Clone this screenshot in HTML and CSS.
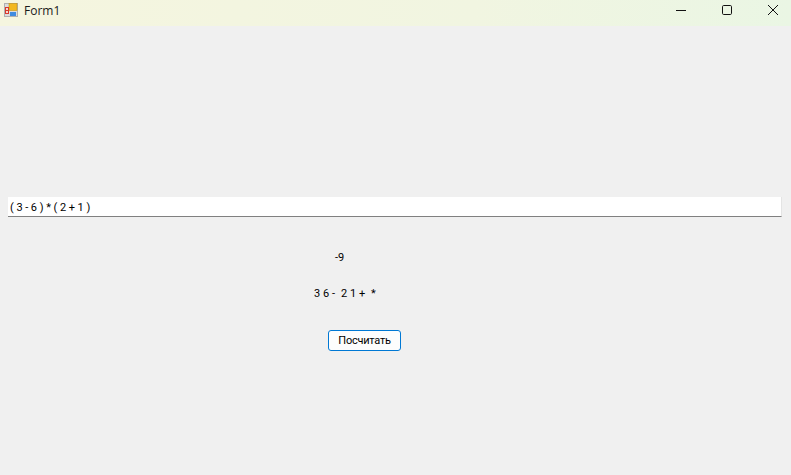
FILE: index.html
```html
<!DOCTYPE html>
<html lang="ru">
<head>
<meta charset="utf-8">
<title>Form1</title>
<link rel="stylesheet" href="styles.css">
</head>
<body>
<div class="window">
  <header class="titlebar">
    <svg class="app-icon" width="14" height="14" viewBox="0 0 14 14">
      <rect x="0.5" y="0.5" width="13" height="13" fill="#dcdcdc" stroke="#b0b0b0"/>
      <rect x="5" y="0.5" width="8" height="7" fill="#f3b81e" stroke="#c4951a" stroke-width="0.6"/>
      <rect x="1" y="4" width="4" height="7" fill="#d93a2c"/>
      <rect x="2" y="5" width="2" height="2" fill="#f4d8d0"/>
      <rect x="2" y="8" width="2" height="2" fill="#f4d8d0"/>
      <rect x="6" y="9" width="6" height="4" fill="#3f8be0"/>
    </svg>
    <span class="title">Form1</span>
    <div class="controls">
      <svg class="ctl" width="46" height="20" viewBox="0 0 46 20"><path d="M18 10.5H28" stroke="#111" fill="none"/></svg>
      <svg class="ctl" width="46" height="20" viewBox="0 0 46 20"><rect x="18.5" y="5.5" width="9" height="9" rx="1.2" stroke="#111" fill="none"/></svg>
      <svg class="ctl" width="46" height="20" viewBox="0 0 46 20"><path d="M18 5L28 15M28 5L18 15" stroke="#111" fill="none"/></svg>
    </div>
  </header>
  <main class="form">
    <div class="expr"><span>( 3 - 6 ) * ( 2 + 1 )</span></div>
    <div class="result">-9</div>
    <div class="rpn">3 6 -&nbsp; 2 1 +&nbsp; *</div>
    <button class="calc" type="button">Посчитать</button>
  </main>
</div>
</body>
</html>
```
FILE: styles.css
```css
html, body {
  margin: 0;
  padding: 0;
  height: 100%;
  overflow: hidden;
}
body {
  background: #f0f0f0;
  font-family: Roboto, "Liberation Sans", Arial, sans-serif;
  color: #000;
}
.window {
  display: flex;
  flex-direction: column;
  height: 100%;
}
.titlebar {
  display: flex;
  align-items: center;
  flex: 0 0 26px;
  height: 26px;
  padding-left: 4px;
  padding-bottom: 6px;
  box-sizing: border-box;
  background: linear-gradient(90deg, #f5f5df 0%, #f1f5e1 60%, #eaf6e4 100%);
}
.app-icon {
  flex: none;
}
.title {
  margin-left: 6px;
  font-family: "Open Sans", "Noto Sans", sans-serif;
  font-size: 12px;
  color: #1a1a1a;
}
.controls {
  display: flex;
  margin-left: auto;
  margin-right: -5px;
}
.form {
  display: flex;
  flex-direction: column;
  align-items: flex-start;
  padding: 171px 9px 0 8px;
  font-size: 11px;
}
.expr {
  width: 100%;
  height: 20px;
  box-sizing: border-box;
  padding: 3px 0 0 2px;
  background: #fff;
  border-right: 1px solid #e4e4e4;
  border-bottom: 1px solid #808080;
  line-height: 15px;
  word-spacing: -0.1px;
}
.result {
  margin: 32px 0 0 327px;
  padding-top: 1px;
  line-height: 15px;
}
.rpn {
  margin: 21px 0 0 306px;
  line-height: 15px;
  word-spacing: 0.15px;
}
.calc {
  width: 73px;
  height: 21px;
  margin: 29px 0 0 320px;
  padding: 0;
  background: #fdfdfd;
  border: 1px solid #0078d4;
  border-radius: 3px;
  font: inherit;
  letter-spacing: -0.25px;
  color: #000;
}
```
